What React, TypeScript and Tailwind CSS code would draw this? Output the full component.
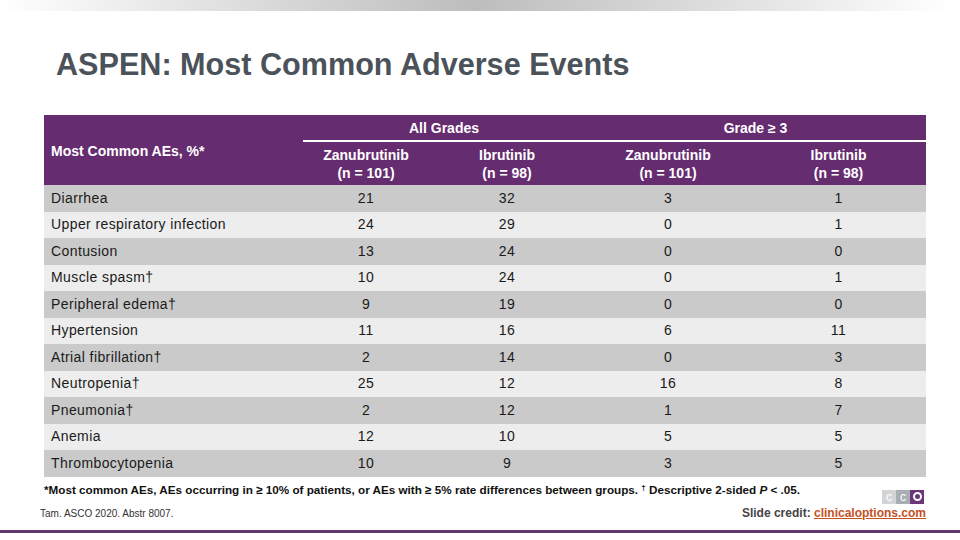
const rows: [string, string, string, string, string][] = [
  ["Diarrhea", "21", "32", "3", "1"],
  ["Upper respiratory infection", "24", "29", "0", "1"],
  ["Contusion", "13", "24", "0", "0"],
  ["Muscle spasm†", "10", "24", "0", "1"],
  ["Peripheral edema†", "9", "19", "0", "0"],
  ["Hypertension", "11", "16", "6", "11"],
  ["Atrial fibrillation†", "2", "14", "0", "3"],
  ["Neutropenia†", "25", "12", "16", "8"],
  ["Pneumonia†", "2", "12", "1", "7"],
  ["Anemia", "12", "10", "5", "5"],
  ["Thrombocytopenia", "10", "9", "3", "5"],
];

function CcoLogo() {
  return (
    <div className="flex h-[14px]">
      <div className="w-[14px] bg-[#d3d4d6] flex items-center justify-center text-white text-[12px] leading-none">c</div>
      <div className="w-[14px] bg-[#a9adb4] flex items-center justify-center text-white text-[12px] leading-none">c</div>
      <div className="w-[14px] bg-[#6b3579] flex items-center justify-center">
        <span className="block w-[9px] h-[9px] rounded-full border-2 border-white" />
      </div>
    </div>
  );
}

export default function App() {
  return (
    <div className="w-[960px] h-[540px] bg-white relative overflow-hidden font-['Liberation_Sans',sans-serif] flex flex-col">
      <div className="h-[11px] w-[950px] bg-gradient-to-r from-white via-[#bdbdbd] to-white" />

      <h1 className="ml-[56px] mt-[35px] text-[30.6px] leading-[36px] font-bold text-[#4b525a]">
        ASPEN: Most Common Adverse Events
      </h1>

      <div className="ml-[44px] mt-[33px] w-[882px] text-[14px] text-[#1a1a1a]">
        <div className="grid grid-cols-[259px_126px_156px_166px_175px] grid-rows-[27px_43px] bg-[#652c70] text-white font-bold">
          <div className="row-span-2 flex items-center pl-[7px] pt-[2px]">Most Common AEs, %*</div>
          <div className="col-span-2 flex items-center justify-center border-b-2 border-white pt-[1px]">All Grades</div>
          <div className="col-span-2 flex items-center justify-center border-b-2 border-white pt-[1px]">Grade ≥ 3</div>
          <div className="flex flex-col items-center justify-center leading-[18px]">
            <span>Zanubrutinib</span>
            <span>(n = 101)</span>
          </div>
          <div className="flex flex-col items-center justify-center leading-[18px]">
            <span>Ibrutinib</span>
            <span>(n = 98)</span>
          </div>
          <div className="flex flex-col items-center justify-center leading-[18px]">
            <span>Zanubrutinib</span>
            <span>(n = 101)</span>
          </div>
          <div className="flex flex-col items-center justify-center leading-[18px]">
            <span>Ibrutinib</span>
            <span>(n = 98)</span>
          </div>
        </div>
        {rows.map((r, i) => (
          <div
            key={r[0]}
            className={`grid grid-cols-[259px_126px_156px_166px_175px] h-[26.5px] items-center tracking-[0.4px] ${
              i % 2 === 0 ? "bg-[#cacaca]" : "bg-[#ededed]"
            }`}
          >
            <div className="pl-[7px]">{r[0]}</div>
            <div className="text-center">{r[1]}</div>
            <div className="text-center">{r[2]}</div>
            <div className="text-center">{r[3]}</div>
            <div className="text-center">{r[4]}</div>
          </div>
        ))}
      </div>

      <div className="ml-[44px] w-[880px] mt-[6px] flex items-start justify-between">
        <p className="text-[11.7px] leading-[14px] font-bold text-[#111]">
          *Most common AEs, AEs occurring in ≥ 10% of patients, or AEs with ≥ 5% rate differences between groups.{" "}
          <sup className="text-[8px]">†</sup> Descriptive 2-sided <i>P</i> &lt; .05.
        </p>
        <div className="mt-[7px]">
          <CcoLogo />
        </div>
      </div>

      <div className="flex justify-between items-end ml-[40px] w-[886px] mt-[1px]">
        <div className="text-[10px] text-[#333] mb-[1px]">Tam. ASCO 2020. Abstr 8007.</div>
        <div className="text-[12px] font-bold text-[#444] -mt-[1px]">
          Slide credit: <span className="text-[#c4501f] underline">clinicaloptions.com</span>
        </div>
      </div>

      <div className="absolute left-0 bottom-[7px] w-full h-[3px] bg-[#5e3869]" />
    </div>
  );
}
